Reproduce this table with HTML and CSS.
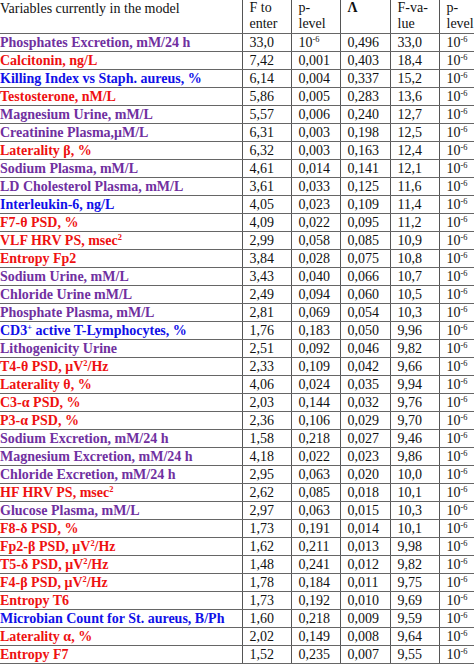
FILE: index.html
```html
<!DOCTYPE html>
<html>
<head>
<meta charset="utf-8">
<link rel="stylesheet" href="styles.css">
</head>
<body>
<table class="tbl">
<colgroup><col class="c-name"><col class="c-num"><col class="c-num"><col class="c-lam"><col class="c-num"><col class="c-num"></colgroup>
<thead>
<tr><th class="name-h">Variables currently in the model</th><th>F to enter</th><th>p-<br>level</th><th class="bold">Λ</th><th>F-va-<br>lue</th><th>p-<br>level</th></tr>
</thead>
<tbody>
<tr><td class="nm pu">Phosphates Excretion, mM/24 h</td><td>33,0</td><td>10<sup>-6</sup></td><td>0,496</td><td>33,0</td><td>10<sup>-6</sup></td></tr>
<tr><td class="nm rd">Calcitonin, ng/L</td><td>7,42</td><td>0,001</td><td>0,403</td><td>18,4</td><td>10<sup>-6</sup></td></tr>
<tr><td class="nm bl">Killing Index vs Staph. aureus, %</td><td>6,14</td><td>0,004</td><td>0,337</td><td>15,2</td><td>10<sup>-6</sup></td></tr>
<tr><td class="nm rd">Testosterone, nM/L</td><td>5,86</td><td>0,005</td><td>0,283</td><td>13,6</td><td>10<sup>-6</sup></td></tr>
<tr><td class="nm pu">Magnesium Urine, mM/L</td><td>5,57</td><td>0,006</td><td>0,240</td><td>12,7</td><td>10<sup>-6</sup></td></tr>
<tr><td class="nm pu">Creatinine Plasma,μM/L</td><td>6,31</td><td>0,003</td><td>0,198</td><td>12,5</td><td>10<sup>-6</sup></td></tr>
<tr><td class="nm rd">Laterality β, %</td><td>6,32</td><td>0,003</td><td>0,163</td><td>12,4</td><td>10<sup>-6</sup></td></tr>
<tr><td class="nm pu">Sodium Plasma, mM/L</td><td>4,61</td><td>0,014</td><td>0,141</td><td>12,1</td><td>10<sup>-6</sup></td></tr>
<tr><td class="nm pu">LD Cholesterol Plasma, mM/L</td><td>3,61</td><td>0,033</td><td>0,125</td><td>11,6</td><td>10<sup>-6</sup></td></tr>
<tr><td class="nm bl">Interleukin-6, ng/L</td><td>4,05</td><td>0,023</td><td>0,109</td><td>11,4</td><td>10<sup>-6</sup></td></tr>
<tr><td class="nm rd">F7-θ PSD, %</td><td>4,09</td><td>0,022</td><td>0,095</td><td>11,2</td><td>10<sup>-6</sup></td></tr>
<tr><td class="nm rd">VLF HRV PS, msec<sup>2</sup></td><td>2,99</td><td>0,058</td><td>0,085</td><td>10,9</td><td>10<sup>-6</sup></td></tr>
<tr><td class="nm rd">Entropy Fp2</td><td>3,84</td><td>0,028</td><td>0,075</td><td>10,8</td><td>10<sup>-6</sup></td></tr>
<tr><td class="nm pu">Sodium Urine, mM/L</td><td>3,43</td><td>0,040</td><td>0,066</td><td>10,7</td><td>10<sup>-6</sup></td></tr>
<tr><td class="nm pu">Chloride Urine mM/L</td><td>2,49</td><td>0,094</td><td>0,060</td><td>10,5</td><td>10<sup>-6</sup></td></tr>
<tr><td class="nm pu">Phosphate Plasma, mM/L</td><td>2,81</td><td>0,069</td><td>0,054</td><td>10,3</td><td>10<sup>-6</sup></td></tr>
<tr><td class="nm bl">CD3<sup>+</sup> active T-Lymphocytes, %</td><td>1,76</td><td>0,183</td><td>0,050</td><td>9,96</td><td>10<sup>-6</sup></td></tr>
<tr><td class="nm pu">Lithogenicity Urine</td><td>2,51</td><td>0,092</td><td>0,046</td><td>9,82</td><td>10<sup>-6</sup></td></tr>
<tr><td class="nm rd">T4-θ PSD, μV<sup>2</sup>/Hz</td><td>2,33</td><td>0,109</td><td>0,042</td><td>9,66</td><td>10<sup>-6</sup></td></tr>
<tr><td class="nm rd">Laterality θ, %</td><td>4,06</td><td>0,024</td><td>0,035</td><td>9,94</td><td>10<sup>-6</sup></td></tr>
<tr><td class="nm rd">C3-α PSD, %</td><td>2,03</td><td>0,144</td><td>0,032</td><td>9,76</td><td>10<sup>-6</sup></td></tr>
<tr><td class="nm rd">P3-α PSD, %</td><td>2,36</td><td>0,106</td><td>0,029</td><td>9,70</td><td>10<sup>-6</sup></td></tr>
<tr><td class="nm pu">Sodium Excretion, mM/24 h</td><td>1,58</td><td>0,218</td><td>0,027</td><td>9,46</td><td>10<sup>-6</sup></td></tr>
<tr><td class="nm pu">Magnesium Excretion, mM/24 h</td><td>4,18</td><td>0,022</td><td>0,023</td><td>9,86</td><td>10<sup>-6</sup></td></tr>
<tr><td class="nm pu">Chloride Excretion, mM/24 h</td><td>2,95</td><td>0,063</td><td>0,020</td><td>10,0</td><td>10<sup>-6</sup></td></tr>
<tr><td class="nm rd">HF HRV PS, msec<sup>2</sup></td><td>2,62</td><td>0,085</td><td>0,018</td><td>10,1</td><td>10<sup>-6</sup></td></tr>
<tr><td class="nm pu">Glucose Plasma, mM/L</td><td>2,97</td><td>0,063</td><td>0,015</td><td>10,3</td><td>10<sup>-6</sup></td></tr>
<tr><td class="nm rd">F8-δ PSD, %</td><td>1,73</td><td>0,191</td><td>0,014</td><td>10,1</td><td>10<sup>-6</sup></td></tr>
<tr><td class="nm rd">Fp2-β PSD, μV<sup>2</sup>/Hz</td><td>1,62</td><td>0,211</td><td>0,013</td><td>9,98</td><td>10<sup>-6</sup></td></tr>
<tr><td class="nm rd">T5-δ PSD, μV<sup>2</sup>/Hz</td><td>1,48</td><td>0,241</td><td>0,012</td><td>9,82</td><td>10<sup>-6</sup></td></tr>
<tr><td class="nm rd">F4-β PSD, μV<sup>2</sup>/Hz</td><td>1,78</td><td>0,184</td><td>0,011</td><td>9,75</td><td>10<sup>-6</sup></td></tr>
<tr><td class="nm rd">Entropy T6</td><td>1,73</td><td>0,192</td><td>0,010</td><td>9,69</td><td>10<sup>-6</sup></td></tr>
<tr><td class="nm bl">Microbian Count for St. aureus, B/Ph</td><td>1,60</td><td>0,218</td><td>0,009</td><td>9,59</td><td>10<sup>-6</sup></td></tr>
<tr><td class="nm rd">Laterality α, %</td><td>2,02</td><td>0,149</td><td>0,008</td><td>9,64</td><td>10<sup>-6</sup></td></tr>
<tr><td class="nm rd">Entropy F7</td><td>1,52</td><td>0,235</td><td>0,007</td><td>9,55</td><td>10<sup>-6</sup></td></tr>
</tbody>
</table>
</body>
</html>
```
FILE: styles.css
```css
html, body {
  margin: 0;
  padding: 0;
  background: #fff;
  overflow: hidden;
  width: 474px;
  height: 665px;
}
.tbl {
  border-collapse: collapse;
  table-layout: fixed;
  width: 488px;
  font-family: "Liberation Serif", "Times New Roman", serif;
  font-size: 14px;
  color: #111;
}
.c-name { width: 242px; }
.c-num { width: 49px; }
.c-lam { width: 50px; }
.tbl th {
  font-weight: normal;
  text-align: left;
  vertical-align: top;
  line-height: 16px;
  height: 33px;
  padding: 0 0 0 7px;
  border-left: 1px solid #555;
  border-bottom: 1px solid #666;
  box-sizing: border-box;
}
.tbl th.name-h {
  padding-left: 0;
  border-left: none;
  padding-top: 1px;
}
.tbl th.bold { font-weight: bold; }
.tbl td {
  height: 18px;
  line-height: 17px;
  padding: 0 0 0 7px;
  white-space: nowrap;
  overflow: hidden;
  border-left: 1px solid #555;
  border-bottom: 1px solid #666;
  box-sizing: border-box;
}
.tbl td.nm {
  padding-left: 0;
  border-left: none;
  font-weight: bold;
}
.pu { color: #7030a0; }
.rd { color: #ee1111; }
.bl { color: #1010e8; }
sup {
  font-size: 0.6em;
  line-height: 0;
  vertical-align: 0.55em;
}
```
